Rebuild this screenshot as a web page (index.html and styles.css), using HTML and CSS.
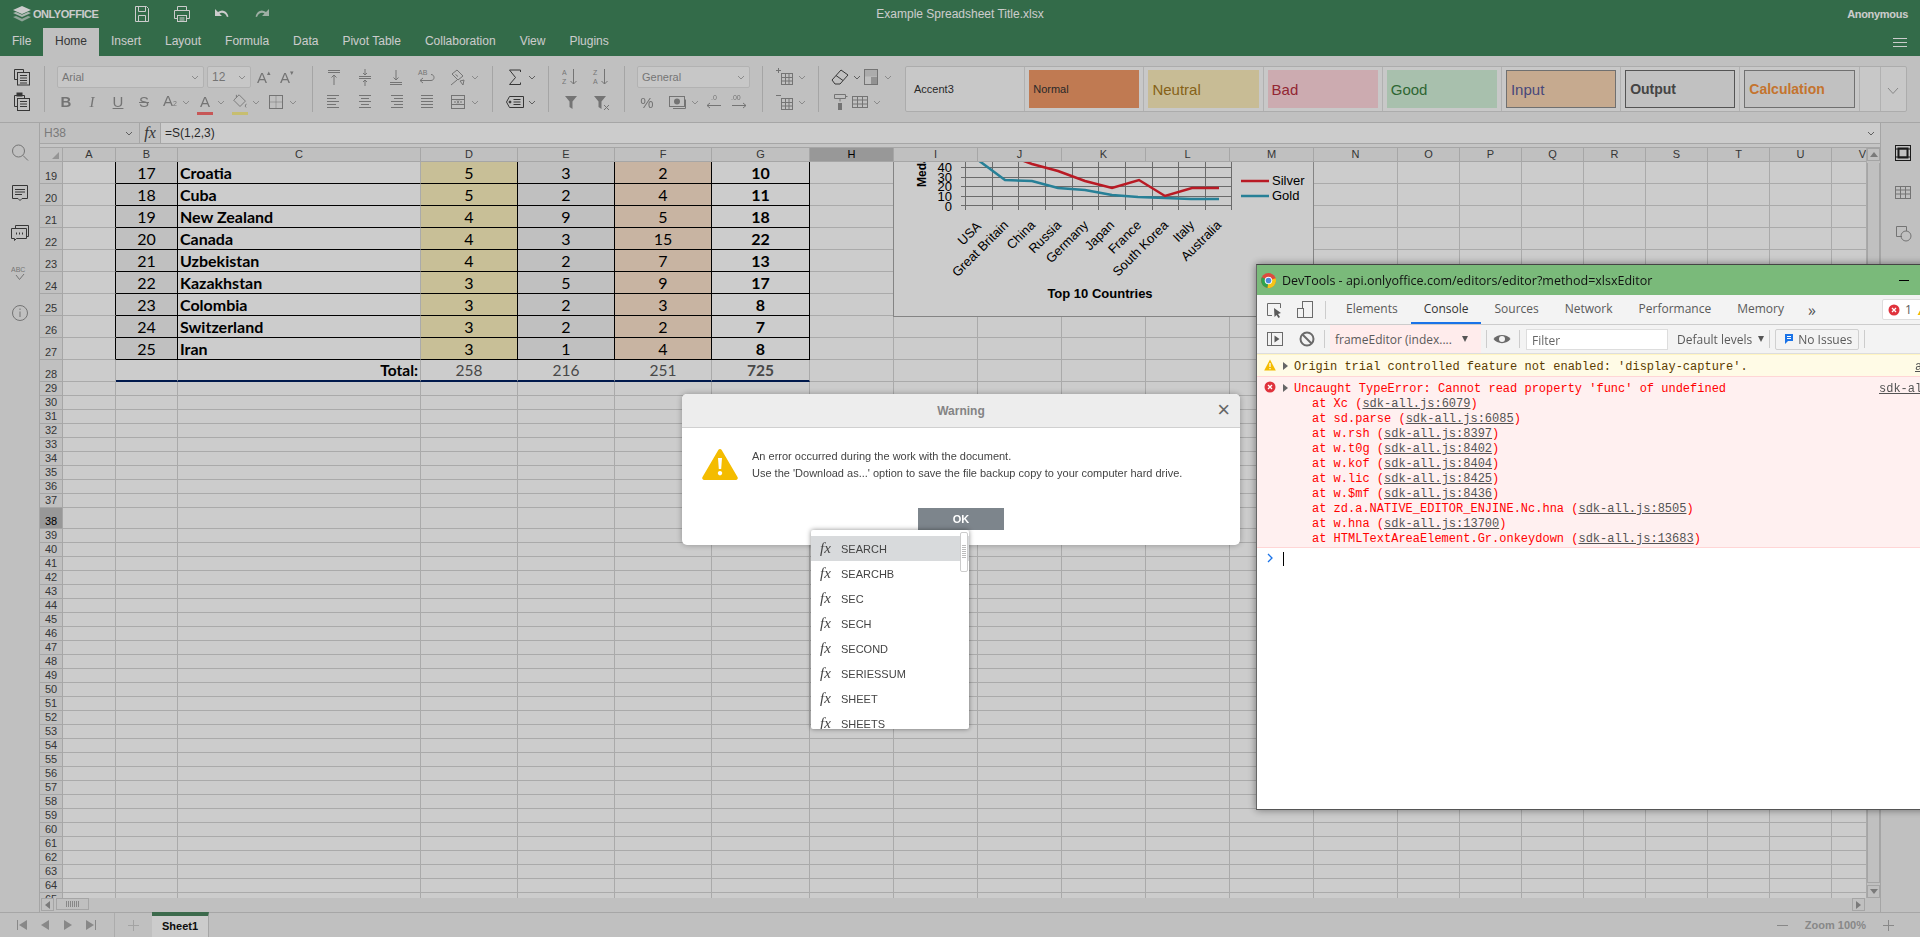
FILE: index.html
```html
<!DOCTYPE html>
<html lang="en">

<head>
    <meta charset="UTF-8">
    <title>Example Spreadsheet Title.xlsx</title>
    <link rel="stylesheet" href="styles.css">
</head>

<body>
    <svg class="sprite" width="0" height="0">
        <symbol id="i-caret" viewBox="0 0 8 5"><path d="M1 1l3 3 3-3" /></symbol>
        <symbol id="i-copy" viewBox="0 0 20 20"><path d="M2.5 2.5h9v3M2.5 2.5v10h3" /><rect x="5.5" y="5.5" width="12" height="12.500" /><path d="M8 8.500h7M8 11h7M8 13.500h7M8 16h7" /></symbol>
        <symbol id="i-paste" viewBox="0 0 20 20"><path d="M2.500 3.500h10v3M2.500 3.500v11h3" /><rect x="5" y="1" width="5" height="3" fill="currentColor" /><rect x="5.500" y="6.500" width="12" height="12" /><path d="M8 9.500h7M8 12h7M8 14.500h7" /></symbol>
        <symbol id="i-save" viewBox="0 0 20 20"><path d="M3.500 2.500h11l2 2v13h-13z" /><path d="M6.500 2.500v5h7v-5M6.500 17.500v-6h7v6" /></symbol>
        <symbol id="i-print" viewBox="0 0 20 20"><path d="M5.500 6.500v-4h9v4M5.500 14.500h-3v-8h15v8h-3" /><rect x="5.500" y="11.500" width="9" height="6" /><path d="M7.500 14h5M7.500 16h5" /></symbol>
        <symbol id="i-undo" viewBox="0 0 20 20"><path d="M3 5v7h7L7.500 9.500C10 8 13.500 9 15 13l1.500-.5C15 6.500 10 5 6 8z" fill="currentColor" stroke="none" /></symbol>
        <symbol id="i-redo" viewBox="0 0 20 20"><path d="M17 5v7h-7l2.500-2.500C10 8 6.500 9 5 13l-1.500-.5C5 6.500 10 5 14 8z" fill="currentColor" stroke="none" /></symbol>
        <symbol id="i-top" viewBox="0 0 20 20"><path d="M4 3.500h12M4 5.500h12M10 18V8M7.500 10.500L10 8l2.500 2.500" /></symbol>
        <symbol id="i-mid" viewBox="0 0 20 20"><path d="M4 9.500h12M4 11.500h12M10 2v6M8 6l2 2 2-2M10 19v-6M8 15l2-2 2 2" /></symbol>
        <symbol id="i-bot" viewBox="0 0 20 20"><path d="M4 15.500h12M4 17.500h12M10 3v10M7.500 10.500L10 13l2.500-2.500" /></symbol>
        <symbol id="i-wrap" viewBox="0 0 20 20"><text x="1" y="8" class="svg-txt">AB</text><path d="M3 13.500h11c4 0 4-6 0-6M6 11l-3 2.500L6 16" /></symbol>
        <symbol id="i-orient" viewBox="0 0 20 20"><path d="M4 7l5-4 6 6-5 4zM7.500 7.500l2.500 2M3 18l6-5M12 14l3 4 1-5z" /></symbol>
        <symbol id="i-left" viewBox="0 0 20 20"><path d="M3 3.500h12M3 6.500h9M3 9.500h12M3 12.500h9M3 15.500h12" /></symbol>
        <symbol id="i-center" viewBox="0 0 20 20"><path d="M4 3.500h12M6 6.500h8M4 9.500h12M6 12.500h8M4 15.500h12" /></symbol>
        <symbol id="i-right" viewBox="0 0 20 20"><path d="M5 3.500h12M8 6.500h9M5 9.500h12M8 12.500h9M5 15.500h12" /></symbol>
        <symbol id="i-just" viewBox="0 0 20 20"><path d="M4 3.500h12M4 6.500h12M4 9.500h12M4 12.500h12M4 15.500h12" /></symbol>
        <symbol id="i-merge" viewBox="0 0 20 20"><rect x="3.500" y="3.500" width="13" height="13" /><path d="M3.500 7.500h13M3.500 12.500h13M6 10h2M12 10h2" /><path d="M9 8.500L10.500 10 9 11.500M11 8.500L9.500 10l1.500 1.500" /></symbol>
        <symbol id="i-sum" viewBox="0 0 20 20"><path d="M15.500 5V3h-11l6 7.500-6 7h11v-2" /></symbol>
        <symbol id="i-named" viewBox="0 0 20 20"><path d="M1.500 10l3-5.500h14v11h-14z" /><circle cx="5" cy="10" r="1" fill="currentColor" /><path d="M8.500 7.500h7M8.500 10h7M8.500 12.500h7" /></symbol>
        <symbol id="i-az" viewBox="0 0 20 20"><text x="1" y="8" class="svg-txt">A</text><text x="1" y="17" class="svg-txt">Z</text><path d="M12.500 2v15M9.500 14l3 3 3-3" /></symbol>
        <symbol id="i-za" viewBox="0 0 20 20"><text x="1" y="8" class="svg-txt">Z</text><text x="1" y="17" class="svg-txt">A</text><path d="M12.500 2v15M9.500 14l3 3 3-3" /></symbol>
        <symbol id="i-filter" viewBox="0 0 20 20"><path d="M4 4h12l-4.500 5.500V17l-3-2V9.500z" fill="currentColor" stroke="none" /></symbol>
        <symbol id="i-filterx" viewBox="0 0 20 20"><path d="M2 4h12L9.500 9.500V17l-3-2V9.500z" fill="currentColor" stroke="none" /><path d="M12 13l5 5M17 13l-5 5" /></symbol>
        <symbol id="i-money" viewBox="0 0 20 20"><rect x="1.500" y="4.500" width="15" height="10" /><circle cx="9" cy="9.500" r="3" fill="currentColor" stroke="none" /><path d="M17.500 7.500v9H5" /></symbol>
        <symbol id="i-decinc" viewBox="0 0 20 20"><text x="7" y="8" class="svg-txt">.0</text><path d="M17 13.500H3M6 11l-3 2.500L6 16" /></symbol>
        <symbol id="i-decdec" viewBox="0 0 20 20"><text x="2" y="8" class="svg-txt">.00</text><path d="M3 13.500h14M14 11l3 2.500-3 2.500" /></symbol>
        <symbol id="i-cellins" viewBox="0 0 20 20"><path d="M1 3.500h5M3.500 1v5" /><rect x="6.500" y="6.500" width="11" height="11" /><path d="M6.500 10.500h11M6.500 14h11M10.500 6.500v11M14 6.500v11" /></symbol>
        <symbol id="i-celldel" viewBox="0 0 20 20"><path d="M1 3.500h5" /><rect x="6.500" y="6.500" width="11" height="11" /><path d="M6.500 10.500h11M6.500 14h11M10.500 6.500v11M14 6.500v11" /></symbol>
        <symbol id="i-eraser" viewBox="0 0 20 20"><path d="M2 13l9-10 7 5-8 9H5zM6 8.500l7 5" /></symbol>
        <symbol id="i-shade" viewBox="0 0 20 20"><rect x="3.500" y="2.500" width="13" height="15" /><rect x="3.500" y="2.500" width="13" height="7" fill="currentColor" fill-opacity=".25" stroke="none" /><rect x="10" y="10" width="6.500" height="7.500" fill="currentColor" fill-opacity=".6" stroke="none" /></symbol>
        <symbol id="i-roller" viewBox="0 0 20 20"><path d="M4.500 2.500h11v4h-11zM15.500 4.500h2M10 6.500v3" /><rect x="8" y="11" width="4" height="7" fill="currentColor" stroke="none" /></symbol>
        <symbol id="i-table" viewBox="0 0 20 20"><rect x="2.500" y="4.500" width="15" height="11" /><path d="M2.500 8h15M2.500 12h15M7.500 4.500v11M12.500 4.500v11" /></symbol>
        <symbol id="i-borders" viewBox="0 0 20 20"><rect x="3.500" y="3.500" width="13" height="13" /><path d="M10 3.500v13M3.500 10h13" stroke-dasharray="1 1" /></symbol>
    </svg>

    <div class="app">
        <div class="title-bar">
            <div class="logo">
                <svg class="logo-mark" width="20" height="18" viewBox="0 0 20 18">
                    <path d="M10 1l9 4-9 4-9-4z" fill="currentColor" />
                    <path d="M1 8l3-1 6 2.700L16 7l3 1-9 4z" fill="currentColor" opacity=".8" />
                    <path d="M1 12l3-1 6 2.700L16 11l3 1-9 4.500z" fill="currentColor" opacity=".6" />
                </svg>
                <span class="logo-text"><b>ONLY</b>OFFICE</span>
            </div>
            <div class="quick">
                <svg class="ic"><use href="#i-save" /></svg>
                <svg class="ic"><use href="#i-print" /></svg>
                <svg class="ic"><use href="#i-undo" /></svg>
                <svg class="ic faded"><use href="#i-redo" /></svg>
            </div>
            <div class="doc-title">Example Spreadsheet Title.xlsx</div>
            <div class="user">Anonymous</div>
        </div>

        <div class="tab-bar">
            <span class="tab">File</span>
            <span class="tab active">Home</span>
            <span class="tab">Insert</span>
            <span class="tab">Layout</span>
            <span class="tab">Formula</span>
            <span class="tab">Data</span>
            <span class="tab">Pivot Table</span>
            <span class="tab">Collaboration</span>
            <span class="tab">View</span>
            <span class="tab">Plugins</span>
            <span class="burger"></span>
        </div>

        <div class="toolbar">
            <div class="tb-group g-clip">
                <div class="tb-row"><svg class="ic"><use href="#i-copy" /></svg></div>
                <div class="tb-row"><svg class="ic"><use href="#i-paste" /></svg></div>
            </div>
            <i class="tb-sep"></i>

            <div class="tb-group g-font off">
                <div class="tb-row">
                    <div class="combo combo-font">Arial<svg class="caret"><use href="#i-caret" /></svg></div>
                    <div class="combo combo-size">12<svg class="caret"><use href="#i-caret" /></svg></div>
                    <span class="bump">A<em>▴</em></span>
                    <span class="bump">A<em>▾</em></span>
                </div>
                <div class="tb-row fmt-row">
                    <span class="fmt bold">B</span>
                    <span class="fmt ital">I</span>
                    <span class="fmt under">U</span>
                    <span class="fmt strike">S</span>
                    <span class="split"><span class="fmt sub">A<small>2</small></span><svg class="caret"><use href="#i-caret" /></svg></span>
                    <span class="split"><span class="fmt color red">A</span><svg class="caret"><use href="#i-caret" /></svg></span>
                    <span class="split"><span class="fmt color yellow"><svg class="ic" viewBox="0 0 20 20"><path d="M9 2l7 7-6 6-7-7zM6 5V2M17 12c-1 2-2 3 0 4" /></svg></span><svg class="caret"><use href="#i-caret" /></svg></span>
                    <span class="split"><svg class="ic"><use href="#i-borders" /></svg><svg class="caret"><use href="#i-caret" /></svg></span>
                </div>
            </div>
            <i class="tb-sep"></i>

            <div class="tb-group g-align off">
                <div class="tb-row">
                    <svg class="ic"><use href="#i-top" /></svg>
                    <svg class="ic"><use href="#i-mid" /></svg>
                    <svg class="ic"><use href="#i-bot" /></svg>
                    <svg class="ic"><use href="#i-wrap" /></svg>
                    <span class="split"><svg class="ic"><use href="#i-orient" /></svg><svg class="caret"><use href="#i-caret" /></svg></span>
                </div>
                <div class="tb-row">
                    <svg class="ic"><use href="#i-left" /></svg>
                    <svg class="ic"><use href="#i-center" /></svg>
                    <svg class="ic"><use href="#i-right" /></svg>
                    <svg class="ic"><use href="#i-just" /></svg>
                    <span class="split"><svg class="ic"><use href="#i-merge" /></svg><svg class="caret"><use href="#i-caret" /></svg></span>
                </div>
            </div>
            <i class="tb-sep"></i>

            <div class="tb-group g-sum">
                <div class="tb-row"><span class="split"><svg class="ic"><use href="#i-sum" /></svg><svg class="caret"><use href="#i-caret" /></svg></span></div>
                <div class="tb-row"><span class="split"><svg class="ic"><use href="#i-named" /></svg><svg class="caret"><use href="#i-caret" /></svg></span></div>
            </div>
            <i class="tb-sep"></i>

            <div class="tb-group g-sort off">
                <div class="tb-row">
                    <svg class="ic"><use href="#i-az" /></svg>
                    <svg class="ic"><use href="#i-za" /></svg>
                </div>
                <div class="tb-row">
                    <svg class="ic"><use href="#i-filter" /></svg>
                    <svg class="ic"><use href="#i-filterx" /></svg>
                </div>
            </div>
            <i class="tb-sep"></i>

            <div class="tb-group g-num off">
                <div class="tb-row">
                    <div class="combo combo-num">General<svg class="caret"><use href="#i-caret" /></svg></div>
                </div>
                <div class="tb-row num-row">
                    <span class="pct">%</span>
                    <span class="split"><svg class="ic"><use href="#i-money" /></svg><svg class="caret"><use href="#i-caret" /></svg></span>
                    <svg class="ic"><use href="#i-decinc" /></svg>
                    <svg class="ic"><use href="#i-decdec" /></svg>
                </div>
            </div>
            <i class="tb-sep"></i>

            <div class="tb-group g-cells off">
                <div class="tb-row"><span class="split"><svg class="ic"><use href="#i-cellins" /></svg><svg class="caret"><use href="#i-caret" /></svg></span></div>
                <div class="tb-row"><span class="split"><svg class="ic"><use href="#i-celldel" /></svg><svg class="caret"><use href="#i-caret" /></svg></span></div>
            </div>
            <i class="tb-sep"></i>

            <div class="tb-group g-clear">
                <div class="tb-row">
                    <span class="split"><svg class="ic"><use href="#i-eraser" /></svg><svg class="caret"><use href="#i-caret" /></svg></span>
                    <span class="split off"><svg class="ic"><use href="#i-shade" /></svg><svg class="caret"><use href="#i-caret" /></svg></span>
                </div>
                <div class="tb-row off">
                    <svg class="ic"><use href="#i-roller" /></svg>
                    <span class="split"><svg class="ic"><use href="#i-table" /></svg><svg class="caret"><use href="#i-caret" /></svg></span>
                </div>
            </div>

            <div class="gallery">
                <div class="style-item"><span class="swatch accent">Accent3</span></div>
                <div class="style-item"><span class="swatch normal">Normal</span></div>
                <div class="style-item"><span class="swatch neutral">Neutral</span></div>
                <div class="style-item"><span class="swatch bad">Bad</span></div>
                <div class="style-item"><span class="swatch good">Good</span></div>
                <div class="style-item"><span class="swatch input">Input</span></div>
                <div class="style-item"><span class="swatch output">Output</span></div>
                <div class="style-item"><span class="swatch calc">Calculation</span></div>
                <div class="gallery-track"></div>
                <div class="gallery-more"><svg class="chevron" viewBox="0 0 12 8"><path d="M1 1l5 5.500L11 1" /></svg></div>
            </div>
        </div>

        <div class="main">
            <div class="left-panel">
                <svg class="side-ic off" viewBox="0 0 20 20"><circle cx="8.500" cy="8" r="6" /><path d="M13 12.500l5 5" /></svg>
                <svg class="side-ic" viewBox="0 0 20 20"><path d="M2.500 2.500h15v13h-5.500l-2 2-2-2h-5.500z" /><path d="M5 6.500h10M5 9h10M5 11.500h7" /></svg>
                <svg class="side-ic" viewBox="0 0 20 20"><path d="M5.500 5.500v-3h13v11h-2M1.500 5.500h15v10h-10l-2 2v-2h-3z" /><path d="M6 10.500h1M9 10.500h1M12 10.500h1" stroke-width="2" /></svg>
                <svg class="side-ic off" viewBox="0 0 20 20"><text x="1" y="9" class="svg-txt">ABC</text><path d="M6 12l3.500 4.500L14 11" /></svg>
                <svg class="side-ic off" viewBox="0 0 20 20"><circle cx="10" cy="10" r="7.500" /><path d="M10 8.500v5.500M10 5.500v1.500" /></svg>
            </div>

            <div class="work">
                <div class="formula">
                    <div class="name-box">H38<svg class="caret"><use href="#i-caret" /></svg></div>
                    <div class="fx-btn">fx</div>
                    <div class="formula-input">=S(1,2,3)<svg class="caret"><use href="#i-caret" /></svg></div>
                </div>
                <div class="formula-gap"></div>

                <div class="sheet">
                    <div class="sheet-view">
                        <div class="sheet-grid" id="sheet"></div>

                        <svg class="chart" viewBox="893 162 421 155">
                            <rect x="893.500" y="150" width="420" height="166.500" class="chart-frame" />
                            <g class="chart-grid">
                                <path d="M961 148.500H1231.500M961 167.500H1231.500M961 177.500H1231.500M961 186.500H1231.500M961 196.500H1231.500M961 205.500H1231.500" />
                                <path d="M965.500 150V210M992.500 150V210M1018.500 150V210M1045.500 150V210M1072.500 150V210M1098.500 150V210M1125.500 150V210M1152.500 150V210M1178.500 150V210M1205.500 150V210M1231.500 150V210" />
                            </g>
                            <text class="ax-title" transform="translate(926 187) rotate(-90)">Medals</text>
                            <g class="ax-y">
                                <text x="952" y="172">40</text>
                                <text x="952" y="182">30</text>
                                <text x="952" y="191">20</text>
                                <text x="952" y="201">10</text>
                                <text x="952" y="211">0</text>
                            </g>
                            <polyline class="ln-gold" points="978,160 1005,180 1032,181 1058,188 1085,190 1112,195 1138,197 1165,198 1191,199 1219,199" />
                            <polyline class="ln-silver" points="1005,154 1032,164 1058,171 1085,181 1112,188 1139,180 1165,196 1192,188 1219,188" />
                            <g class="ax-x">
                                <text transform="translate(982 227) rotate(-45)">USA</text>
                                <text transform="translate(1009 226) rotate(-45)">Great Britain</text>
                                <text transform="translate(1036 226) rotate(-45)">China</text>
                                <text transform="translate(1062 226) rotate(-45)">Russia</text>
                                <text transform="translate(1089 226) rotate(-45)">Germany</text>
                                <text transform="translate(1115 226) rotate(-45)">Japan</text>
                                <text transform="translate(1142 226) rotate(-45)">France</text>
                                <text transform="translate(1169 226) rotate(-45)">South Korea</text>
                                <text transform="translate(1195 226) rotate(-45)">Italy</text>
                                <text transform="translate(1222 226) rotate(-45)">Australia</text>
                            </g>
                            <text class="ch-title" x="1100" y="298">Top 10 Countries</text>
                            <path class="ln-silver" d="M1241 181H1269" />
                            <path class="ln-gold" d="M1241 196H1269" />
                            <text class="legend" x="1272" y="185">Silver</text>
                            <text class="legend" x="1272" y="200">Gold</text>
                        </svg>
                    </div>

                    <div class="vscroll">
                        <span class="sb-btn"><i class="tri up"></i></span>
                        <span class="sb-thumb"></span>
                        <span class="sb-btn"><i class="tri down"></i></span>
                    </div>
                </div>

                <div class="hscroll">
                    <span class="sb-btn"><i class="tri lft"></i></span>
                    <span class="sb-thumb-h"></span>
                    <span class="sb-btn end"><i class="tri rgt"></i></span>
                </div>
            </div>

            <div class="right-panel">
                <svg class="side-ic dark" viewBox="0 0 20 20"><rect x="2.500" y="2.500" width="15" height="15" /><rect x="5.500" y="5.500" width="9" height="9" stroke-width="2" /><path d="M2.500 6h15M2.500 14h15" /></svg>
                <svg class="side-ic off" viewBox="0 0 20 20"><rect x="2.500" y="3.500" width="15" height="12" /><path d="M2.500 7h15M2.500 11h15M7.500 3.500v12M12.500 3.500v12" /></svg>
                <svg class="side-ic off" viewBox="0 0 20 20"><path d="M9 13.500H3.500v-10h10V8" /><circle cx="13" cy="13" r="5" /></svg>
            </div>
        </div>

        <div class="status-bar">
            <div class="sheet-nav">
                <svg viewBox="0 0 12 12"><path d="M1.500 1v10" /><path d="M11 1v10L3 6z" class="solid" /></svg>
                <svg viewBox="0 0 12 12"><path d="M10 1v10L2 6z" class="solid" /></svg>
                <svg viewBox="0 0 12 12"><path d="M2 1v10l8-5z" class="solid" /></svg>
                <svg viewBox="0 0 12 12"><path d="M10.500 1v10" /><path d="M1 1v10l8-5z" class="solid" /></svg>
            </div>
            <div class="add-sheet"><span></span></div>
            <div class="sheet-tab">Sheet1</div>
            <div class="zoom-box">
                <span class="zoom-btn minus"></span>
                <span class="zoom-val">Zoom 100%</span>
                <span class="zoom-btn plus"></span>
            </div>
        </div>
    </div>

    <div class="mask"></div>

    <div class="dialog">
        <div class="dialog-head">Warning<span class="dialog-x">×</span></div>
        <div class="dialog-body">
            <svg class="warn-big" viewBox="0 0 36 32"><path d="M18 1a2 2 0 0 1 1.700 1L35.500 29a2 2 0 0 1-1.700 3H2.200a2 2 0 0 1-1.700-3L16.300 2A2 2 0 0 1 18 1z" fill="#f4bc00" /><path d="M16 10h4l-.8 11h-2.400z M18 23a2.200 2.200 0 1 0 .01 0z" fill="#fff" /></svg>
            <p>An error occurred during the work with the document.<br>Use the 'Download as...' option to save the file backup copy to your computer hard drive.</p>
        </div>
        <div class="dialog-foot"><button class="ok-btn">OK</button></div>
    </div>

    <div class="autocomplete">
        <div class="ac-item on"><i>fx</i>SEARCH</div>
        <div class="ac-item"><i>fx</i>SEARCHB</div>
        <div class="ac-item"><i>fx</i>SEC</div>
        <div class="ac-item"><i>fx</i>SECH</div>
        <div class="ac-item"><i>fx</i>SECOND</div>
        <div class="ac-item"><i>fx</i>SERIESSUM</div>
        <div class="ac-item"><i>fx</i>SHEET</div>
        <div class="ac-item"><i>fx</i>SHEETS</div>
        <span class="ac-thumb"></span>
    </div>

    <div class="devtools">
        <div class="dt-title">
            <svg class="chrome" viewBox="0 0 16 16">
                <circle cx="8" cy="8" r="8" fill="#dd4b3e" />
                <path d="M8 8L1 4.500A8 8 0 0 0 7 15.900z" fill="#2da44e" />
                <path d="M8 8l7.600-2.500A8 8 0 0 1 7 15.900z" fill="#f5c518" />
                <circle cx="8" cy="8" r="4" fill="#fff" />
                <circle cx="8" cy="8" r="3" fill="#4a89dc" />
            </svg>
            <span>DevTools - api.onlyoffice.com/editors/editor?method=xlsxEditor</span>
            <i class="dt-min"></i>
        </div>
        <div class="dt-tabs">
            <svg class="dt-ic" viewBox="0 0 20 20"><path d="M7 15.500H2.500v-12h13V8" /><path d="M9 8l7 5-3 1 2 3-1.500 1-2-3-2 2z" fill="#5a5a5a" stroke="none" /></svg>
            <svg class="dt-ic" viewBox="0 0 20 20"><rect x="7.500" y="1.500" width="10" height="16" /><rect x="2.500" y="8.500" width="6" height="9" fill="#f3f3f3" /></svg>
            <i class="dt-sep"></i>
            <span class="dt-tab">Elements</span>
            <span class="dt-tab on">Console</span>
            <span class="dt-tab">Sources</span>
            <span class="dt-tab">Network</span>
            <span class="dt-tab">Performance</span>
            <span class="dt-tab">Memory</span>
            <span class="dt-more">»</span>
            <span class="dt-badge">
                <svg class="err-dot" viewBox="0 0 12 12"><circle cx="6" cy="6" r="5.500" fill="#e0323c" /><path d="M4 4l4 4M8 4l-4 4" stroke="#fff" stroke-width="1.300" /></svg>
                <b>1</b>
                <svg class="warn-dot" viewBox="0 0 12 12"><path d="M6 1l5.500 10H.5z" fill="#f4bc00" /></svg>
            </span>
        </div>
        <div class="dt-bar">
            <svg class="dt-ic" viewBox="0 0 20 20"><rect x="2.500" y="3.500" width="15" height="13" /><path d="M6.500 3.500v13" /><path d="M9.500 6.500l5 3.500-5 3.500z" fill="#5a5a5a" stroke="none" /></svg>
            <svg class="dt-ic" viewBox="0 0 20 20"><circle cx="10" cy="10" r="6.500" stroke-width="2" /><path d="M5.500 5.500l9 9" stroke-width="2" /></svg>
            <i class="dt-sep"></i>
            <span class="ctx">frameEditor (index....<i class="arrow"></i></span>
            <i class="dt-sep"></i>
            <svg class="dt-ic" viewBox="0 0 20 20"><path d="M1.500 10C5 4.500 15 4.500 18.500 10 15 15.500 5 15.500 1.500 10z" fill="#6a6a6a" stroke="none" /><circle cx="10" cy="10" r="3" fill="#f3f3f3" stroke="none" /></svg>
            <i class="dt-sep"></i>
            <span class="dt-filter">Filter</span>
            <span class="levels">Default levels<i class="arrow"></i></span>
            <i class="dt-sep"></i>
            <span class="issues"><svg viewBox="0 0 10 10"><path d="M1 0h8v7H4L1 10z" fill="#1a73e8" /><path d="M3 2.500h4M3 4.500h4" stroke="#fff" /></svg>No Issues</span>
            <i class="dt-sep"></i>
        </div>
        <div class="con-row warn">
            <svg class="con-ic" viewBox="0 0 12 12"><path d="M6 .5l5.800 11H.2z" fill="#f4bc00" /><path d="M6 4v4M6 9v1.300" stroke="#fff" stroke-width="1.200" /></svg>
            <i class="tri-r"></i>
            <span>Origin trial controlled feature not enabled: 'display-capture'.</span>
            <a class="src">api.js:123</a>
        </div>
        <div class="con-row err">
            <svg class="con-ic" viewBox="0 0 12 12"><circle cx="6" cy="6" r="5.500" fill="#e0323c" /><path d="M4 4l4 4M8 4l-4 4" stroke="#fff" stroke-width="1.300" /></svg>
            <i class="tri-r"></i>
            <div class="trace">
                <div class="trace-head"><span>Uncaught TypeError: Cannot read property 'func' of undefined</span><a class="src">sdk-all.js:6079</a></div>
                <div class="at">at Xc (<a>sdk-all.js:6079</a>)</div>
                <div class="at">at sd.parse (<a>sdk-all.js:6085</a>)</div>
                <div class="at">at w.rsh (<a>sdk-all.js:8397</a>)</div>
                <div class="at">at w.t0g (<a>sdk-all.js:8402</a>)</div>
                <div class="at">at w.kof (<a>sdk-all.js:8404</a>)</div>
                <div class="at">at w.lic (<a>sdk-all.js:8425</a>)</div>
                <div class="at">at w.$mf (<a>sdk-all.js:8436</a>)</div>
                <div class="at">at zd.a.NATIVE_EDITOR_ENJINE.Nc.hna (<a>sdk-all.js:8505</a>)</div>
                <div class="at">at w.hna (<a>sdk-all.js:13700</a>)</div>
                <div class="at">at HTMLTextAreaElement.Gr.onkeydown (<a>sdk-all.js:13683</a>)</div>
            </div>
        </div>
        <div class="con-input"><svg viewBox="0 0 8 10"><path d="M2 1l4 4-4 4" /></svg><i class="cursor"></i></div>
    </div>

    <script src="sheet.js"></script>
</body>

</html>
```
FILE: styles.css
```css
* {
    box-sizing: border-box;
}

html,
body {
    margin: 0;
    height: 100%;
    overflow: hidden;
}

body {
    font-family: "Liberation Sans", Arial, sans-serif;
    font-size: 12px;
    color: #444;
    background-color: #fff;
}

.sprite {
    position: absolute;
}

.svg-txt {
    font: 7px "Liberation Sans", sans-serif;
    fill: currentColor;
    stroke: none;
}

.ic {
    flex: none;
    width: 20px;
    height: 20px;
    fill: none;
    stroke: currentColor;
    stroke-width: 1;
}

.caret {
    flex: none;
    width: 8px;
    height: 5px;
    fill: none;
    stroke: #777;
}

.app {
    display: flex;
    flex-direction: column;
    height: 937px;
    width: 1920px;
}

/* header */
.title-bar {
    display: flex;
    align-items: center;
    position: relative;
    flex: none;
    height: 28px;
    background-color: #40865c;
    color: #fff;
}

.logo {
    display: flex;
    align-items: center;
    width: 132px;
    padding-left: 12px;
}

.logo-mark {
    margin-right: 1px;
}

.logo-text {
    font-size: 11px;
    letter-spacing: -.45px;
    font-weight: 700;
}

.logo-text b {
    font-weight: 700;
}

.quick {
    display: flex;
    gap: 20px;
}

.faded {
    opacity: .7;
}

.doc-title {
    position: absolute;
    left: 0;
    right: 0;
    text-align: center;
    font-size: 12px;
}

.user {
    margin-left: auto;
    padding-right: 12px;
    font-size: 11px;
    font-weight: 700;
    letter-spacing: -.3px;
}

.tab-bar {
    display: flex;
    flex: none;
    height: 28px;
    background-color: #40865c;
    color: #fff;
}

.tab {
    padding: 6px 12px 0;
    font-size: 12px;
}

.tab:first-child {
    padding: 6px 12px 0 12px;
    width: 43px;
}

.tab.active {
    width: 56px;
    background-color: #f1f1f1;
    color: #444;
}

.burger {
    margin: 10px 13px 0 auto;
    width: 14px;
    height: 9px;
    border-top: 1px solid #fff;
    border-bottom: 1px solid #fff;
    background: linear-gradient(#fff, #fff) center / 100% 1px no-repeat;
}

/* toolbar */
.toolbar {
    display: flex;
    flex: none;
    height: 67px;
    padding-top: 10px;
    background-color: #f1f1f1;
    border-bottom: 1px solid #d0d0d0;
}

.tb-group {
    display: flex;
    flex: none;
    flex-direction: column;
    gap: 3px;
}

.tb-row {
    display: flex;
    align-items: center;
    height: 22px;
    gap: 11px;
}

.tb-sep {
    flex: none;
    width: 1px;
    height: 46px;
    background-color: #cfcfcf;
}

.off {
    opacity: .55;
}

.g-clip {
    width: 44px;
    padding-left: 12px;
}

.g-font {
    width: 267px;
    padding-left: 12px;
}

.g-font .tb-row {
    gap: 3px;
}

.g-align {
    width: 179px;
    padding-left: 11px;
}

.g-sum {
    width: 55px;
    padding-left: 12px;
}

.g-sort {
    width: 75px;
    padding-left: 12px;
}

.g-num {
    width: 137px;
    padding-left: 12px;
}

.g-cells {
    width: 55px;
    padding-left: 12px;
}

.g-clear {
    width: 86px;
    padding-left: 11px;
}

.g-clear .tb-row {
    gap: 0;
}

.split {
    display: inline-flex;
    flex: none;
    align-items: center;
    gap: 3px;
}

.combo {
    display: flex;
    align-items: center;
    justify-content: space-between;
    flex: none;
    height: 22px;
    padding: 0 4px;
    border: 1px solid #cfcfcf;
    border-radius: 2px;
    background-color: #fff;
    font-size: 11px;
    color: #444;
}

.combo-font {
    width: 147px;
}

.combo-size {
    width: 44px;
    font-size: 12px;
}

.combo-num {
    width: 113px;
}

.bump {
    width: 20px;
    font-size: 15px;
    text-align: center;
    white-space: nowrap;
    color: #444;
}

.bump em {
    font-size: 7px;
    font-style: normal;
    vertical-align: 8px;
}

.g-font .fmt-row {
    gap: 8px;
}

.fmt {
    display: inline-block;
    flex: none;
    position: relative;
    width: 18px;
    font-size: 15px;
    line-height: 18px;
    text-align: center;
    color: #444;
}

.bold {
    font-weight: 700;
}

.ital {
    font-style: italic;
    font-family: "Liberation Serif", serif;
}

.under {
    text-decoration: underline;
}

.strike {
    text-decoration: line-through;
}

.sub small {
    font-size: 7px;
}

.color::after {
    content: "";
    position: absolute;
    left: 1px;
    right: 1px;
    bottom: -4px;
    height: 3px;
}

.red::after {
    background-color: #ff0000;
}

.yellow::after {
    background-color: #ffeb3b;
}

.fmt .ic {
    display: block;
    width: 18px;
    height: 18px;
}

.fmt-row .split {
    margin-right: -2px;
}

.num-row {
    gap: 5px;
}

.pct {
    width: 20px;
    margin-right: 6px;
    font-size: 15px;
    text-align: center;
}

.num-row .split {
    margin-right: 0;
}

.gallery {
    display: flex;
    margin-left: 0;
    width: 1002px;
    height: 46px;
    background-color: #fafafa;
    border: 1px solid #d8d8d8;
    border-radius: 2px;
}

.style-item {
    flex: none;
    width: 119.200px;
    padding: 3px 4px;
    border-right: 1px solid #dedede;
}

.swatch {
    display: flex;
    align-items: center;
    height: 38px;
    padding: 0 4px;
    font-size: 15px;
    white-space: nowrap;
}

.accent {
    padding-left: 4px;
    font-size: 11px;
    color: #333;
}

.normal {
    font-size: 11px;
    color: #333;
    background-color: #f09967;
}

.neutral {
    color: #a87a20;
    background-color: #faecbb;
}

.bad {
    color: #b83040;
    background-color: #ffd6dc;
}

.good {
    color: #3a803f;
    background-color: #d3f1d9;
}

.input {
    color: #5a5a9a;
    background-color: #f8d5b3;
    border: 1px solid #8c8c8c;
}

.output {
    color: #555;
    font-weight: 700;
    font-size: 14px;
    background-color: #f2f2f2;
    border: 1px solid #6a6a6a;
}

.calc {
    color: #f5913a;
    font-weight: 700;
    font-size: 14px;
    background-color: #f2f2f2;
    border: 1px solid #8c8c8c;
}

.gallery-track {
    flex: none;
    width: 21px;
    border-right: 1px solid #dedede;
}

.gallery-more {
    flex: 1;
    display: flex;
    align-items: center;
    justify-content: center;
}

.chevron {
    width: 12px;
    height: 8px;
    margin-top: 3px;
    fill: none;
    stroke: #aaa;
    stroke-width: 1;
}

/* body of the editor */
.main {
    display: flex;
    flex: 1;
    min-height: 0;
}

.left-panel {
    display: flex;
    flex: none;
    flex-direction: column;
    align-items: center;
    gap: 20px;
    width: 40px;
    padding-top: 20px;
    background-color: #f1f1f1;
    border-right: 1px solid #cfcfcf;
}

.right-panel {
    display: flex;
    flex: none;
    flex-direction: column;
    align-items: center;
    gap: 20px;
    width: 40px;
    padding: 20px 0 0 4px;
    background-color: #f1f1f1;
    border-left: 1px solid #cfcfcf;
}

.side-ic {
    flex: none;
    width: 20px;
    height: 20px;
    fill: none;
    stroke: #444;
    stroke-width: 1;
}

.side-ic.dark {
    stroke: #222;
}

.work {
    display: flex;
    flex: 1;
    flex-direction: column;
    min-width: 0;
}

.formula {
    display: flex;
    flex: none;
    height: 21px;
    background-color: #fff;
    border-bottom: 1px solid #d0d0d0;
}

.name-box {
    display: flex;
    align-items: center;
    justify-content: space-between;
    flex: none;
    width: 100px;
    padding: 0 6px 0 4px;
    color: #999;
    background-color: #f1f1f1;
    border-right: 1px solid #d0d0d0;
}

.fx-btn {
    flex: none;
    width: 21px;
    font: italic 16px/20px "Liberation Serif", serif;
    text-align: center;
    background-color: #f1f1f1;
    border-right: 1px solid #d0d0d0;
}

.formula-input {
    display: flex;
    flex: 1;
    align-items: center;
    justify-content: space-between;
    padding: 0 5px 0 4px;
    color: #333;
}

.formula-gap {
    flex: none;
    height: 4px;
    background-color: #f7f7f7;
    border-bottom: 1px solid #d0d0d0;
}

.sheet {
    display: flex;
    flex: 1;
    min-height: 0;
}

.sheet-view {
    flex: 1;
    position: relative;
    overflow: hidden;
    min-width: 0;
}

.sheet-grid {
    display: grid;
    grid-template-columns: 23px 53px 62px 243px 97px 97px 97px 98px repeat(6, 84px) 84px repeat(8, 62px);
    grid-template-rows: 14px repeat(10, 22px) repeat(9, 14px) 21px repeat(27, 14px);
}

.cell {
    display: flex;
    align-items: center;
    justify-content: center;
    min-width: 0;
    background-color: #fff;
    border-right: 1px solid #d5d5d5;
    border-bottom: 1px solid #d5d5d5;
    font-family: Lato, sans-serif;
    font-size: 16px;
    color: #000;
}

.head,
.row-head {
    font-family: "Liberation Sans", sans-serif;
    font-size: 11px;
    color: #444;
    background-color: #f1f1f1;
    border-color: #d0d0d0;
}

.head {
    line-height: 13px;
}

.row-head {
    align-items: flex-end;
    line-height: 13px;
}

.head.sel,
.row-head.sel {
    background-color: #bfbfbf;
    color: #000;
}

.corner {
    position: relative;
}

.corner::after {
    content: "";
    position: absolute;
    right: 3px;
    bottom: 2px;
    border-style: solid;
    border-width: 0 0 7px 7px;
    border-color: transparent transparent #bbb transparent;
}

.tbl {
    border-bottom-color: #000;
    border-right-color: #000;
}

.cell.prev-edge {
    border-right-color: #000;
}

.t-c {
    justify-content: flex-start;
    padding-left: 2px;
    font-weight: 700;
    border-right-color: #d5d5d5;
}

.t-b,
.t-e {
    background-color: #f1f1f1;
}

.t-d {
    background-color: #fbefbd;
}

.t-f {
    background-color: #fbe2cb;
}

.t-g {
    font-weight: 700;
}

.tot {
    font-size: 15.500px;
    color: #5a5a5a;
    border-bottom: 2px solid #002060;
}

.tot-label {
    justify-content: flex-end;
    padding-right: 2px;
    font-weight: 700;
    color: #000;
}

.tot-sum {
    font-weight: 700;
}

/* chart */
.chart {
    position: absolute;
    left: 853px;
    top: 14px;
    width: 421px;
    height: 155px;
    font-family: "Liberation Sans", sans-serif;
}

.chart-frame {
    fill: #fff;
    stroke: #a6a6a6;
}

.chart-grid {
    fill: none;
    stroke: #868686;
}

.ax-title {
    font-size: 12px;
    font-weight: 700;
}

.ax-y text {
    font-size: 13px;
    text-anchor: end;
}

.ax-x text {
    font-size: 13px;
    text-anchor: end;
}

.ln-gold,
.ln-silver {
    fill: none;
    stroke-width: 2.500;
}

.ln-gold {
    stroke: #31a0bd;
}

.ln-silver {
    stroke: #e8212d;
}

.ch-title {
    font-size: 13px;
    font-weight: 700;
    text-anchor: middle;
}

.legend {
    font-size: 13px;
}

/* scrollbars */
.vscroll {
    display: flex;
    flex: none;
    flex-direction: column;
    gap: 2px;
    width: 14px;
    background-color: #f1f1f1;
    border-left: 1px solid #d5d5d5;
}

.sb-btn {
    display: flex;
    flex: none;
    align-items: center;
    justify-content: center;
    width: 13px;
    height: 13px;
    background-color: #f1f1f1;
    border: 1px solid #cfcfcf;
}

.vscroll .sb-thumb {
    flex: 1;
    border: 1px solid #cfcfcf;
    border-top: 0;
}

.tri {
    display: block;
    width: 0;
    height: 0;
    border-style: solid;
}

.tri.up {
    border-width: 0 4px 5px;
    border-color: transparent transparent #999;
}

.tri.down {
    border-width: 5px 4px 0;
    border-color: #999 transparent transparent;
}

.tri.lft {
    border-width: 4px 5px 4px 0;
    border-color: transparent #999 transparent transparent;
}

.tri.rgt {
    border-width: 4px 0 4px 5px;
    border-color: transparent transparent transparent #999;
}

.hscroll {
    display: flex;
    flex: none;
    align-items: flex-start;
    gap: 2px;
    height: 14px;
    padding-left: 1px;
    background-color: #f1f1f1;
}

.sb-thumb-h {
    flex: none;
    width: 33px;
    height: 12px;
    border: 1px solid #cfcfcf;
    background: repeating-linear-gradient(90deg, #aaa 0 1px, transparent 1px 2px) center / 13px 6px no-repeat;
}

.sb-btn.end {
    margin-left: auto;
    margin-right: 15px;
}

/* sheet tabs and zoom */
.status-bar {
    display: flex;
    flex: none;
    height: 25px;
    background-color: #f1f1f1;
    border-top: 1px solid #d0d0d0;
}

.sheet-nav {
    display: flex;
    align-items: center;
    gap: 11px;
    width: 115px;
    padding-left: 16px;
    border-right: 1px solid #d8d8d8;
}

.sheet-nav svg {
    width: 12px;
    height: 12px;
    stroke: #aaa;
    fill: none;
}

.sheet-nav .solid {
    fill: #aaa;
    stroke: none;
}

.add-sheet {
    width: 37px;
    display: flex;
    align-items: center;
    justify-content: center;
}

.add-sheet span {
    width: 11px;
    height: 11px;
    background: linear-gradient(#ccc, #ccc) center / 100% 1px no-repeat, linear-gradient(#ccc, #ccc) center / 1px 100% no-repeat;
}

.sheet-tab {
    width: 57px;
    margin-top: -1px;
    padding-top: 4px;
    font-size: 11px;
    font-weight: 700;
    line-height: 20px;
    text-align: center;
    color: #111;
    background-color: #fff;
    border-top: 4px solid #4b8560;
    border-right: 1px solid #d0d0d0;
    height: 25px;
    padding-top: 0;
}

.zoom-box {
    display: flex;
    align-items: center;
    margin-left: auto;
    padding-right: 26px;
    color: #aaa;
}

.zoom-val {
    margin: 0 17px;
    font-size: 11px;
    font-weight: 700;
    white-space: nowrap;
}

.zoom-btn {
    width: 11px;
    height: 11px;
    background: linear-gradient(#aaa, #aaa) center / 100% 1px no-repeat;
}

.zoom-btn.plus {
    background: linear-gradient(#aaa, #aaa) center / 100% 1px no-repeat, linear-gradient(#aaa, #aaa) center / 1px 100% no-repeat;
}

/* modal mask and what sits over it */
.mask {
    position: absolute;
    inset: 0;
    background-color: rgba(0, 0, 0, .2);
}

.dialog {
    position: absolute;
    left: 682px;
    top: 394px;
    width: 558px;
    height: 151px;
    background-color: #fff;
    border-radius: 5px;
    box-shadow: 0 0 6px rgba(0, 0, 0, .3);
    overflow: hidden;
}

.dialog-head {
    position: relative;
    height: 34px;
    line-height: 35px;
    text-align: center;
    font-size: 12px;
    font-weight: 700;
    color: #848484;
    background-color: #ededed;
    border-bottom: 1px solid #d0d0d0;
}

.dialog-x {
    position: absolute;
    right: 10px;
    top: -2px;
    font-size: 22px;
    font-weight: 400;
    line-height: 36px;
    color: #666;
}

.dialog-body {
    display: flex;
    padding: 20px 0 0 20px;
}

.warn-big {
    flex: none;
    width: 36px;
    height: 32px;
    margin-right: 14px;
}

.dialog-body p {
    margin: 0;
    font-size: 11px;
    line-height: 17px;
    white-space: nowrap;
    color: #444;
}

.dialog-foot {
    text-align: center;
    margin-top: 26px;
}

.ok-btn {
    width: 86px;
    height: 22px;
    padding: 0;
    border: none;
    font-family: inherit;
    font-size: 11px;
    font-weight: 700;
    color: #fff;
    background-color: #7d858c;
}

.autocomplete {
    position: absolute;
    left: 811px;
    top: 530px;
    width: 158px;
    height: 199px;
    padding-top: 6px;
    overflow: hidden;
    background-color: #fff;
    border-radius: 2px;
    box-shadow: 0 0 5px rgba(0, 0, 0, .45);
}

.ac-item {
    display: flex;
    align-items: center;
    height: 25px;
    padding-left: 9px;
    font-size: 11px;
    color: #444;
}

.ac-item.on {
    background-color: #d8dadc;
}

.ac-item i {
    width: 21px;
    font: italic 15px "Liberation Serif", serif;
    color: #444;
}

.ac-thumb {
    position: absolute;
    right: 1px;
    top: 2px;
    width: 8px;
    height: 40px;
    background: repeating-linear-gradient(#bbb 0 1px, transparent 1px 2px) center / 4px 14px no-repeat #fff;
    border: 1px solid #ccc;
    border-radius: 2px;
}

/* devtools window */
.devtools {
    position: absolute;
    left: 1256px;
    top: 264px;
    width: 737px;
    height: 546px;
    overflow: hidden;
    background-color: #fff;
    font-family: "Open Sans", sans-serif;
    border-top: 1px solid #444;
    border-left: 1px solid #666;
    border-bottom: 1px solid #555;
    box-shadow: 0 0 8px rgba(0, 0, 0, .45);
}

.dt-title {
    display: flex;
    align-items: center;
    height: 30px;
    padding-left: 4px;
    background-color: #7aba7a;
    font-size: 12.500px;
    color: #111;
    position: relative;
}

.chrome {
    width: 15px;
    height: 15px;
    margin-right: 6px;
}

.dt-min {
    position: absolute;
    left: 642px;
    top: 15px;
    width: 10px;
    height: 1px;
    background-color: #000;
}

.dt-tabs {
    display: flex;
    align-items: center;
    position: relative;
    height: 30px;
    padding-left: 8px;
    gap: 0;
    background-color: #f3f3f3;
    border-bottom: 1px solid #ccc;
    font-size: 12px;
    color: #5a5a5a;
}

.dt-ic {
    flex: none;
    width: 20px;
    height: 20px;
    margin-right: 10px;
    fill: none;
    stroke: #6a6a6a;
}

.dt-sep {
    flex: none;
    width: 1px;
    height: 18px;
    background-color: #ccc;
}

.dt-tab {
    flex: none;
    height: 29px;
    padding: 0 13px;
    line-height: 28px;
}

.dt-tabs .dt-sep {
    margin: 0 7px 0 0;
}

.dt-tab.on {
    color: #333;
    border-bottom: 2px solid #1a73e8;
}

.dt-more {
    margin-left: 11px;
    font-size: 16px;
    line-height: 24px;
    color: #555;
}

.dt-badge {
    position: absolute;
    left: 625px;
    top: 4px;
    display: flex;
    align-items: center;
    gap: 5px;
    width: 60px;
    height: 21px;
    padding-left: 5px;
    background-color: #fff;
    border: 1px solid #ddd;
    border-radius: 2px;
}

.dt-badge b {
    font-weight: 400;
}

.err-dot {
    width: 12px;
    height: 12px;
}

.warn-dot {
    width: 12px;
    height: 12px;
}

.dt-bar {
    display: flex;
    align-items: center;
    height: 29px;
    padding-left: 8px;
    background-color: #f3f3f3;
    border-bottom: 1px solid #ddd;
    font-size: 12px;
    color: #5a5a5a;
}

.dt-bar .dt-sep {
    margin: 0 5px;
}

.dt-bar .dt-ic {
    margin-right: 2px;
}

.dt-bar .dt-ic + .dt-ic {
    margin-left: 10px;
}

.ctx {
    display: flex;
    align-items: center;
    width: 151px;
    height: 28px;
    padding-left: 5px;
    white-space: nowrap;
    background-color: #ffecec;
}

.arrow {
    display: inline-block;
    margin-left: 10px;
    border-style: solid;
    border-width: 6px 3.500px 0;
    border-color: #555 transparent transparent;
}

.dt-filter {
    flex: none;
    width: 142px;
    height: 21px;
    margin-left: 1px;
    padding-left: 5px;
    line-height: 21px;
    color: #666;
    background-color: #fff;
    border: 1px solid #ddd;
}

.levels {
    display: flex;
    align-items: center;
    margin-left: 9px;
    white-space: nowrap;
}

.levels .arrow {
    margin-left: 6px;
}

.issues {
    display: flex;
    align-items: center;
    gap: 4px;
    flex: none;
    width: 84px;
    height: 21px;
    padding-left: 8px;
    white-space: nowrap;
    border: 1px solid #d0d0d0;
    border-radius: 2px;
}

.issues svg {
    width: 10px;
    height: 10px;
}

.con-row {
    display: flex;
    position: relative;
    padding-left: 37px;
    font: 12px/15px "Liberation Mono", monospace;
}

.con-ic {
    position: absolute;
    left: 7px;
    top: 4px;
    width: 12px;
    height: 12px;
}

.tri-r {
    position: absolute;
    left: 26px;
    top: 7px;
    border-style: solid;
    border-width: 4px 0 4px 5px;
    border-color: transparent transparent transparent #666;
}

.con-row.warn {
    height: 23px;
    padding-top: 5px;
    color: #5c3b00;
    background-color: #fffbe6;
    border-top: 1px solid #fff5c2;
    border-bottom: 1px solid #ffd6d6;
}

.con-row.err {
    height: 171px;
    padding-top: 5px;
    color: #f00;
    background-color: #fff0f0;
    border-bottom: 1px solid #ffd6d6;
}

.src {
    position: absolute;
    left: 622px;
    color: #545454;
    text-decoration: underline;
}

.con-row.warn .src {
    left: 658px;
}

.trace-head {
    display: flex;
}

.at {
    padding-left: 18px;
    white-space: nowrap;
}

.at a {
    color: #545454;
    text-decoration: underline;
}

.con-input {
    position: relative;
    height: 24px;
}

.con-input svg {
    position: absolute;
    left: 9px;
    top: 5px;
    width: 8px;
    height: 10px;
    fill: none;
    stroke: #1a73e8;
    stroke-width: 1.300;
}

.cursor {
    position: absolute;
    left: 26px;
    top: 4px;
    width: 1px;
    height: 14px;
    background-color: #000;
}
```
FILE: sheet.js
```js
const columns = 'ABCDEFGHIJKLMNOPQRSTUV'.split('');

const countries = [
    [17, 'Croatia', 5, 3, 2, 10],
    [18, 'Cuba', 5, 2, 4, 11],
    [19, 'New Zealand', 4, 9, 5, 18],
    [20, 'Canada', 4, 3, 15, 22],
    [21, 'Uzbekistan', 4, 2, 7, 13],
    [22, 'Kazakhstan', 3, 5, 9, 17],
    [23, 'Colombia', 3, 2, 3, 8],
    [24, 'Switzerland', 3, 2, 2, 7],
    [25, 'Iran', 3, 1, 4, 8]
];

const sheet = document.getElementById('sheet');

function addCell(className, text) {
    const cell = document.createElement('div');
    cell.className = 'cell ' + className;
    if (text !== undefined) cell.textContent = text;
    sheet.appendChild(cell);
}

function addRowHead(number) {
    addCell('row-head' + (number === 38 ? ' sel' : ''), number);
}

addCell('head corner');
columns.forEach(name => addCell('head' + (name === 'H' ? ' sel' : ''), name));

countries.forEach((row, i) => {
    addRowHead(19 + i);
    addCell('prev-edge');
    addCell('tbl t-b', row[0]);
    addCell('tbl t-c', row[1]);
    addCell('tbl t-d', row[2]);
    addCell('tbl t-e', row[3]);
    addCell('tbl t-f', row[4]);
    addCell('tbl t-g', row[5]);
    for (let c = 7; c < columns.length; c++) addCell('blank');
});

addRowHead(28);
addCell('blank');
addCell('tot');
addCell('tot tot-label', 'Total:');
addCell('tot', 258);
addCell('tot', 216);
addCell('tot', 251);
addCell('tot tot-sum', 725);
for (let c = 7; c < columns.length; c++) addCell('blank');

for (let number = 29; number <= 65; number++) {
    addRowHead(number);
    columns.forEach(() => addCell('blank'));
}
```
